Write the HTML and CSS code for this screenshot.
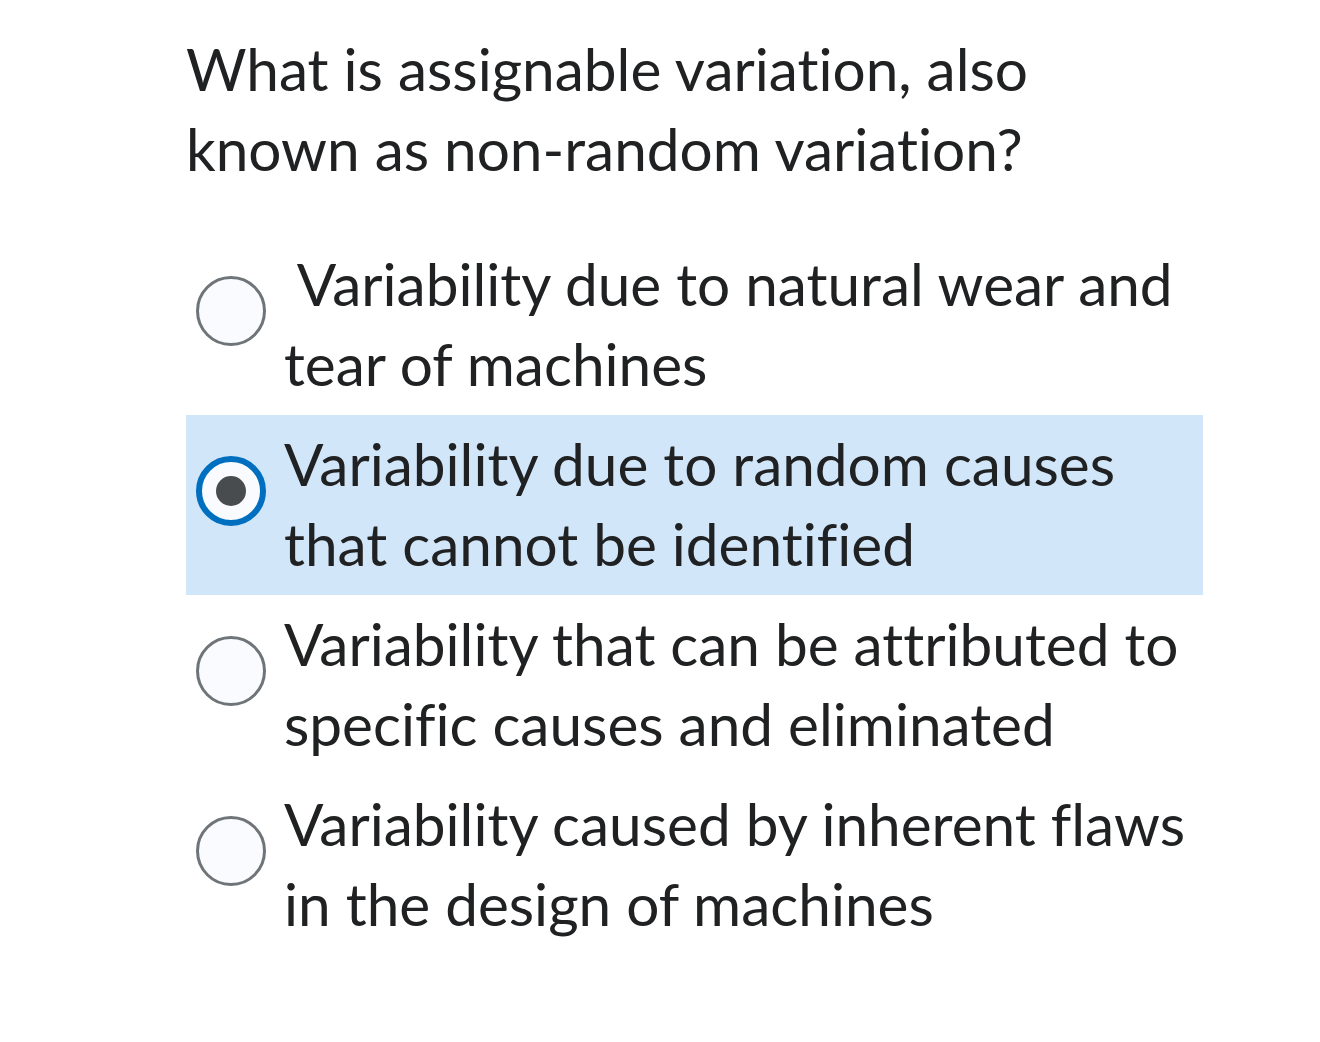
FILE: index.html
```html
<!DOCTYPE html>
<html>
<head>
<meta charset="utf-8">
<link rel="stylesheet" href="styles.css">
</head>
<body>
<div class="quiz">
  <p class="question">What is assignable variation, also known as non-random variation?</p>
  <div class="options">
    <label class="option">
      <span class="radio"></span>
      <span class="text">&nbsp;Variability due to natural wear and tear of machines</span>
    </label>
    <label class="option selected">
      <span class="radio"><span class="dot"></span></span>
      <span class="text">Variability due to random causes that cannot be identified</span>
    </label>
    <label class="option">
      <span class="radio"></span>
      <span class="text">Variability that can be attributed to specific causes and eliminated</span>
    </label>
    <label class="option">
      <span class="radio"></span>
      <span class="text">Variability caused by inherent flaws in the design of machines</span>
    </label>
  </div>
</div>
</body>
</html>
```

FILE: styles.css
```css
html, body {
  margin: 0;
  padding: 0;
  background: #ffffff;
}
body {
  font-family: Lato, "Open Sans", sans-serif;
  color: #202122;
  font-variant-ligatures: none;
  font-feature-settings: "liga" 0, "clig" 0;
}
.quiz {
  width: 1017px;
  margin-left: 186px;
  padding-top: 28px;
}
.question {
  margin: 0;
  font-size: 58.5px;
  line-height: 80px;
  width: 880px;
}
.options {
  margin-top: 47px;
  display: flex;
  flex-direction: column;
}
.option {
  display: flex;
  align-items: flex-start;
  gap: 18px;
  padding: 8px 10px 12px 10px;
  height: 160px;
}
.option.selected {
  background: #d1e6f9;
}
.radio {
  flex: none;
  box-sizing: border-box;
  width: 70px;
  height: 70px;
  margin-top: 33px;
  border-radius: 50%;
  border: 3px solid #6e7477;
  background: #f9fbff;
  display: flex;
  align-items: center;
  justify-content: center;
}
.selected .radio {
  border: 6px solid #006fbf;
}
.dot {
  width: 30px;
  height: 30px;
  border-radius: 50%;
  background: #494c4e;
}
.text {
  font-size: 58.5px;
  line-height: 80px;
}
```
